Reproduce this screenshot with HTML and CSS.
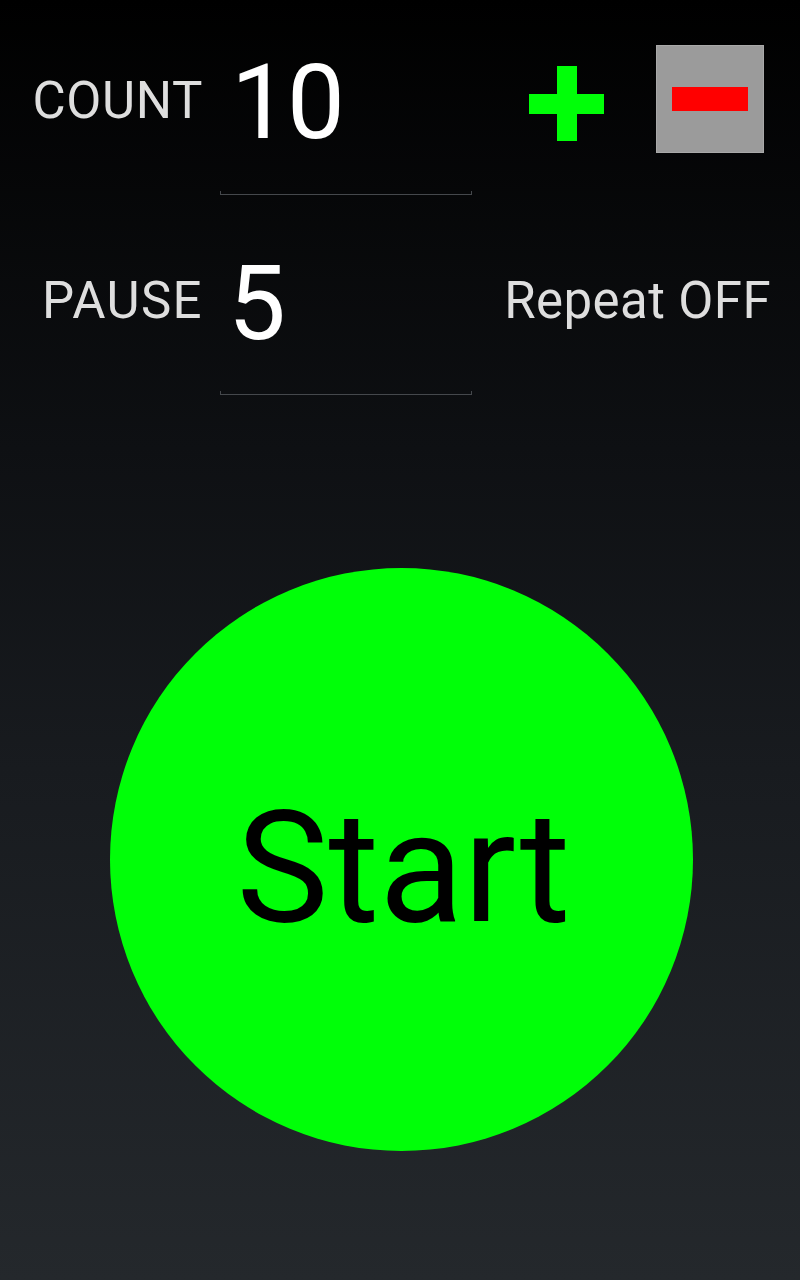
FILE: index.html
```html
<!DOCTYPE html>
<html lang="en">
<head>
<meta charset="utf-8">
<title>Interval Counter</title>
<link rel="stylesheet" href="styles.css">
</head>
<body>
<main class="screen">
  <section class="row">
    <span class="label">COUNT</span>
    <div class="field"><span class="value value-count">10</span></div>
    <div class="actions">
      <button class="btn btn-plus" aria-label="Increase">
        <svg width="75" height="75" viewBox="0 0 75 75">
          <rect x="28" y="0" width="20" height="75" fill="#00ff08"/>
          <rect x="0" y="28" width="75" height="20" fill="#00ff08"/>
        </svg>
      </button>
      <button class="btn btn-minus" aria-label="Decrease">
        <span class="minus-bar"></span>
      </button>
    </div>
  </section>

  <section class="row">
    <span class="label label-pause">PAUSE</span>
    <div class="field"><span class="value value-pause">5</span></div>
    <span class="repeat">Repeat OFF</span>
  </section>

  <button class="start">Start</button>
</main>
</body>
</html>
```

FILE: styles.css
```css
html, body {
  margin: 0;
  padding: 0;
  height: 100%;
}

body {
  background: linear-gradient(to bottom, #000000 0%, #0e1013 35%, #181b1f 60%, #24282c 100%);
  font-family: Roboto, "Noto Sans", sans-serif;
  overflow: hidden;
}

.screen {
  display: flex;
  flex-direction: column;
  padding-top: 6px;
  height: 1280px;
  box-sizing: border-box;
}

.row {
  display: flex;
  align-items: center;
  height: 190px;
  margin-bottom: 10px;
}

.label {
  width: 203px;
  text-align: right;
  font-size: 51px;
  line-height: 60px;
  color: #dedede;
  letter-spacing: 0.6px;
}

.label-pause {
  letter-spacing: 1.4px;
}

.field {
  position: relative;
  align-self: stretch;
  display: flex;
  align-items: center;
  width: 252px;
  margin-left: 17px;
  padding-left: 11px;
  box-sizing: border-box;
}

/* underline with small raised ends */
.field::after {
  content: "";
  position: absolute;
  left: 0;
  right: 0;
  bottom: 1px;
  height: 3px;
  border: 1px solid #45484c;
  border-top: none;
}

.value {
  color: #ffffff;
  font-size: 103px;
  line-height: 110px;
  position: relative;
  top: 2px;
}

.value-count {
  letter-spacing: -2px;
}

.value-pause {
  left: -3px;
  top: 3px;
}

.actions {
  display: flex;
  align-items: center;
  gap: 36px;
  margin-left: auto;
  margin-right: 36px;
}

.btn {
  width: 108px;
  height: 108px;
  padding: 0;
  border: none;
  background: transparent;
  display: flex;
  align-items: center;
  justify-content: center;
}

.btn-plus {
  margin-top: 4px;
}

.btn-minus {
  background: #9b9b9b;
  border: 1px solid #a9a9a9;
  box-sizing: border-box;
  margin-top: -4px;
}

.minus-bar {
  display: block;
  width: 76px;
  height: 24px;
  background: #ff0000;
}

.repeat {
  margin-left: auto;
  margin-right: 29px;
  font-size: 51px;
  line-height: 60px;
  color: #dedede;
  letter-spacing: 0.4px;
}

.start {
  margin: 162px 0 0 110px;
  width: 583px;
  height: 583px;
  border: none;
  border-radius: 50%;
  background: #00ff08;
  color: #000000;
  font-family: Roboto, "Noto Sans", sans-serif;
  font-size: 155px;
  line-height: 170px;
  padding: 16px 0 0 4px;
  display: flex;
  align-items: center;
  justify-content: center;
}
```
